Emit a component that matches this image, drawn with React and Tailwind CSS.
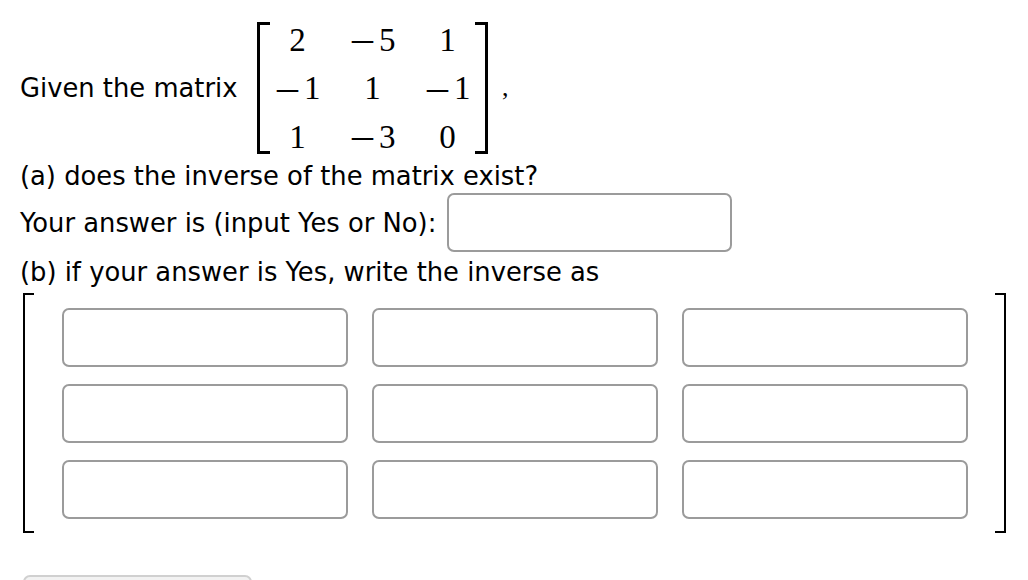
import React from "react";

const matrix = ["2", "-5", "1", "-1", "1", "-1", "1", "-3", "0"];

const Cell = ({ value }) => {
  const negative = value.startsWith("-");
  return (
    <span className="whitespace-nowrap text-center">
      {negative && (
        <span className="mr-[6px] align-[-1.5px] text-[42px] leading-[0]">–</span>
      )}
      {negative ? value.slice(1) : value}
    </span>
  );
};

const AnswerBox = ({ className = "" }) => (
  <input
    type="text"
    className={`block h-[59px] rounded-[7px] border-2 border-[#9b9b9b] bg-white ${className}`}
  />
);

const App = () => {
  return (
    <div className="h-[580px] w-[1028px] overflow-hidden bg-white pl-[20px] text-black font-['DejaVu_Sans',sans-serif] text-[25.8px] leading-[32px]">
      {/* given matrix */}
      <div className="flex items-center pt-[22px]">
        <span className="w-[237px]">Given the matrix</span>
        <div className="flex h-[132px] w-[231px] font-['Liberation_Serif',serif] text-[33px]">
          <div className="w-[13px] border-y-[3px] border-l-[3px] border-black" />
          <div className="grid flex-1 grid-cols-[41px_41px_41px] content-center justify-center gap-x-[34px] gap-y-[16.5px]">
            {matrix.map((cell, i) => (
              <Cell key={i} value={cell} />
            ))}
          </div>
          <div className="w-[13px] border-y-[3px] border-r-[3px] border-black" />
        </div>
        <span className="ml-[14px] font-['Liberation_Serif',serif]">,</span>
      </div>

      <p className="mt-[6px]">(a) does the inverse of the matrix exist?</p>

      <div className="mt-[1px] flex items-center">
        <span className="w-[427px]">Your answer is (input Yes or No):</span>
        <AnswerBox className="w-[285px]" />
      </div>

      <p className="mt-[4px]">(b) if your answer is Yes, write the inverse as</p>

      {/* inverse matrix */}
      <div className="ml-[3px] mt-[5px] flex h-[240px] w-[983px]">
        <div className="w-[11px] border-y-2 border-l-2 border-black" />
        <div className="grid flex-1 grid-cols-[286px_286px_286px] content-center justify-center gap-x-[24px] gap-y-[17px]">
          {Array.from({ length: 9 }).map((_, i) => (
            <AnswerBox key={i} className="w-full" />
          ))}
        </div>
        <div className="w-[11px] border-y-2 border-r-2 border-black" />
      </div>

      <button className="ml-[3px] mt-[42px] block h-[40px] w-[229px] rounded-[7px] border-2 border-[#d0d0d0] bg-[#f2f2f2]" />
    </div>
  );
};

export default App;
